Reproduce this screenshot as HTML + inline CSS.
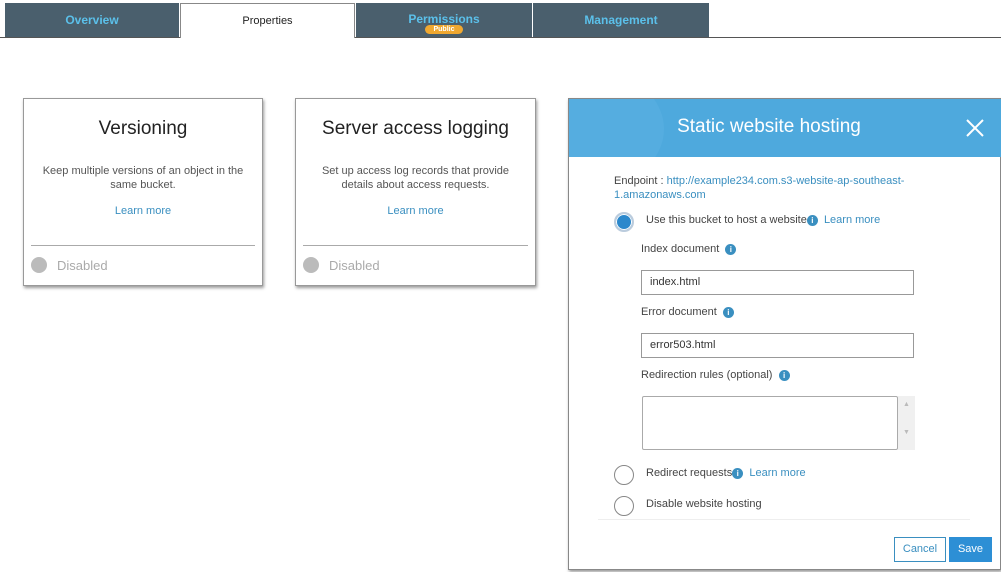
<!DOCTYPE html>
<html><head><style>
*{box-sizing:border-box;margin:0;padding:0}
body{width:1001px;height:572px;background:#fff;font-family:"Liberation Sans",Arial,sans-serif;position:relative;overflow:hidden;color:#444}
.abs{position:absolute}
.tab{position:absolute;top:3px;height:34px;background:#4a5f6d;color:#5bc0ea;font-weight:bold;font-size:12px;text-align:center;line-height:34px}
.card{position:absolute;top:98px;width:240px;height:188px;border:1px solid #999;box-shadow:1px 2px 3px rgba(0,0,0,.4);background:#fff;text-align:center}
.card h2{font-weight:normal;font-size:19px;color:#222;margin-top:19px}
.card p{font-size:11px;color:#555;margin:24px 10px 0;line-height:14px}
.card a{display:block;color:#3a8fc0;font-size:11px;margin-top:13px}
.card .hr{position:absolute;left:7px;right:7px;top:146px;border-top:1px solid #aaa}
.card .dis{position:absolute;left:7px;top:158px;font-size:13px;color:#aaa}
.card .dot{display:inline-block;width:16px;height:16px;border-radius:50%;background:#bbb;vertical-align:-3px;margin-right:10px}
.lbl{position:absolute;font-size:11px;color:#444}
.inp{position:absolute;left:641px;width:273px;height:25px;border:1px solid #999;font-size:11px;line-height:23px;padding-left:8px;color:#333}
.info{display:inline-block;width:11px;height:11px;border-radius:50%;background:#3a8fc0;color:#fff;font-size:8px;line-height:11px;text-align:center;font-weight:bold;vertical-align:0}
.radio{position:absolute;left:614px;width:20px;height:20px;border-radius:50%;border:1px solid #888;background:#fff}
.link{color:#3a8fc0}
</style></head><body>
<div class="abs" style="left:0;top:37px;width:1001px;border-top:1px solid #555"></div>
<div class="tab" style="left:5px;width:174px">Overview</div>
<div class="abs" style="left:180px;top:3px;width:175px;height:35px;background:#fff;border:1px solid #888;border-bottom:none;text-align:center;line-height:34px;font-size:11px;color:#222">Properties</div>
<div class="tab" style="left:356px;width:176px;line-height:32px">Permissions</div>
<div class="abs" style="left:425px;top:25px;width:38px;height:9px;background:#f0a830;border-radius:5px;color:#fff;font-size:7px;line-height:9px;text-align:center;font-weight:bold">Public</div>
<div class="tab" style="left:533px;width:176px">Management</div>

<div class="card" style="left:23px"><h2>Versioning</h2><p>Keep multiple versions of an object in the same bucket.</p><a>Learn more</a><div class="hr"></div><div class="dis"><span class="dot"></span>Disabled</div></div>
<div class="card" style="left:295px;width:241px"><h2>Server access logging</h2><p>Set up access log records that provide details about access requests.</p><a>Learn more</a><div class="hr"></div><div class="dis"><span class="dot"></span>Disabled</div></div>

<div class="abs" style="left:568px;top:98px;width:433px;height:472px;border:1px solid #888;box-shadow:1px 2px 3px rgba(0,0,0,.4);background:#fff"></div>
<div class="abs" style="left:569px;top:99px;width:432px;height:58px;background:#4ea9dd;overflow:hidden">
<div class="abs" style="left:-30px;top:-25px;width:125px;height:110px;border-radius:50%;background:#55ade0"></div>
<div class="abs" style="left:0;top:17px;width:400px;text-align:center;color:#fff;font-size:19px">Static website hosting</div>
<svg class="abs" style="left:397px;top:20px" width="18" height="18"><path d="M1 1L17 17M17 1L1 17" stroke="#fff" stroke-width="2"/></svg>
</div>
<div class="lbl" style="left:614px;top:174px;line-height:14px">Endpoint : <span class="link">http://example234.com.s3-website-ap-southeast-<br>1.amazonaws.com</span></div>
<div class="radio" style="top:212px;border:2px solid #bcd;background:#2b88cc;box-shadow:inset 0 0 0 1px #fff"></div>
<div class="lbl" style="left:646px;top:214px">Use this bucket to host a website<span class="info">i</span>&nbsp; <span class="link">Learn more</span></div>
<div class="lbl" style="left:641px;top:243px">Index document &nbsp;<span class="info">i</span></div>
<div class="inp" style="top:270px">index.html</div>
<div class="lbl" style="left:641px;top:306px">Error document &nbsp;<span class="info">i</span></div>
<div class="inp" style="top:333px">error503.html</div>
<div class="lbl" style="left:641px;top:369px">Redirection rules (optional) &nbsp;<span class="info">i</span></div>
<div class="abs" style="left:642px;top:396px;width:256px;height:54px;border:1px solid #aaa;border-radius:2px"></div>
<div class="abs" style="left:898px;top:396px;width:17px;height:54px;background:#f0f0f0;color:#bbb;font-size:7px;text-align:center;padding-top:5px">▲<br><br><br><br>▼</div>
<div class="radio" style="top:465px"></div>
<div class="lbl" style="left:646px;top:467px">Redirect requests<span class="info">i</span>&nbsp; <span class="link">Learn more</span></div>
<div class="radio" style="top:496px"></div>
<div class="lbl" style="left:646px;top:498px">Disable website hosting</div>
<div class="abs" style="left:598px;top:519px;width:372px;border-top:1px solid #eee"></div>
<div class="abs" style="left:894px;top:537px;width:52px;height:25px;border:1px solid #3a8fc0;color:#3a8fc0;font-size:11px;text-align:center;line-height:23px">Cancel</div>
<div class="abs" style="left:949px;top:537px;width:43px;height:25px;background:#2d8fd5;color:#fff;font-size:11px;text-align:center;line-height:25px">Save</div>
</body></html>
